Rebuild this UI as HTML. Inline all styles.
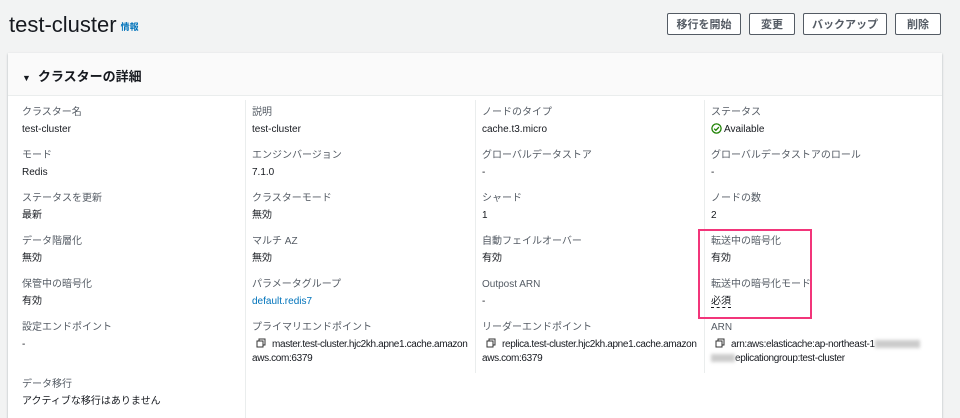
<!DOCTYPE html>
<html><head><meta charset="utf-8"><style>
*{margin:0;padding:0;box-sizing:border-box}
html,body{width:960px;height:418px;overflow:hidden}
body{background:#f2f3f3;font-family:"Liberation Sans","Noto Sans CJK JP",sans-serif;color:#16191f;position:relative}
.t{position:absolute;left:9px;top:12px;font-size:22px;color:#16191f}
.t small{font-size:9px;color:#0073bb;font-weight:bold;margin-left:4px;vertical-align:middle}
.btn{position:absolute;top:13px;height:22px;border:1px solid #545b64;background:#fff;font-size:11px;font-weight:bold;color:#545b64;display:flex;align-items:center;justify-content:center;border-radius:2px}
.panel{position:absolute;left:8px;top:53px;width:934px;height:380px;background:#fff;box-shadow:0 1px 2px rgba(0,28,36,.3)}
.hd{height:43px;background:#fafafa;border-bottom:1px solid #eaeded;font-size:13px;font-weight:bold;padding:13px 0 0 14px}
.hd span{font-size:9px;margin-right:7px}
.div{position:absolute;width:1px;background:#eaeded}
.f{position:absolute;font-size:10px;line-height:14px;white-space:nowrap}
.f .l{color:#545b64}
.f .v{margin-top:3px;color:#16191f}
.f .v.n{letter-spacing:-0.35px}
.ok{color:#1d8102}
a{color:#0073bb;text-decoration:none}
.pink{position:absolute;left:698px;top:229px;width:114px;height:90px;border:2px solid #f2357a}
.cp{display:inline-block;vertical-align:-1px;margin:0 6px 0 4px}
.blur{display:inline-block;width:45px;height:8px;background:#ccc;filter:blur(1.5px);vertical-align:middle}
</style></head><body>
<div class="t">test-cluster<small>情報</small></div>
<div class="btn" style="left:667px;width:74px">移行を開始</div>
<div class="btn" style="left:749px;width:46px">変更</div>
<div class="btn" style="left:803px;width:84px">バックアップ</div>
<div class="btn" style="left:895px;width:46px">削除</div>
<div class="panel"><div class="hd"><span>▼</span>クラスターの詳細</div></div>
<div class="div" style="left:245px;top:100px;height:318px"></div>
<div class="div" style="left:475px;top:100px;height:273px"></div>
<div class="div" style="left:704px;top:100px;height:273px"></div>

<div class="f" style="left:22px;top:106px"><div class="l">クラスター名</div><div class="v">test-cluster</div></div>
<div class="f" style="left:252px;top:106px"><div class="l">説明</div><div class="v">test-cluster</div></div>
<div class="f" style="left:482px;top:106px"><div class="l">ノードのタイプ</div><div class="v">cache.t3.micro</div></div>
<div class="f" style="left:711px;top:106px"><div class="l">ステータス</div><div class="v ok"><svg width="11" height="11" viewBox="0 0 12 12" style="vertical-align:-2px;margin-right:2px"><circle cx="6" cy="6" r="5" fill="none" stroke="#1d8102" stroke-width="1.4"/><path d="M3.5 6.2l1.8 1.8 3.3-3.5" fill="none" stroke="#1d8102" stroke-width="1.4"/></svg>Available</div></div>

<div class="f" style="left:22px;top:149px"><div class="l">モード</div><div class="v">Redis</div></div>
<div class="f" style="left:252px;top:149px"><div class="l">エンジンバージョン</div><div class="v">7.1.0</div></div>
<div class="f" style="left:482px;top:149px"><div class="l">グローバルデータストア</div><div class="v">-</div></div>
<div class="f" style="left:711px;top:149px"><div class="l">グローバルデータストアのロール</div><div class="v">-</div></div>

<div class="f" style="left:22px;top:192px"><div class="l">ステータスを更新</div><div class="v">最新</div></div>
<div class="f" style="left:252px;top:192px"><div class="l">クラスターモード</div><div class="v">無効</div></div>
<div class="f" style="left:482px;top:192px"><div class="l">シャード</div><div class="v">1</div></div>
<div class="f" style="left:711px;top:192px"><div class="l">ノードの数</div><div class="v">2</div></div>

<div class="f" style="left:22px;top:235px"><div class="l">データ階層化</div><div class="v">無効</div></div>
<div class="f" style="left:252px;top:235px"><div class="l">マルチ AZ</div><div class="v">無効</div></div>
<div class="f" style="left:482px;top:235px"><div class="l">自動フェイルオーバー</div><div class="v">有効</div></div>
<div class="f" style="left:711px;top:235px"><div class="l">転送中の暗号化</div><div class="v">有効</div></div>

<div class="f" style="left:22px;top:278px"><div class="l">保管中の暗号化</div><div class="v">有効</div></div>
<div class="f" style="left:252px;top:278px"><div class="l">パラメータグループ</div><div class="v"><a>default.redis7</a></div></div>
<div class="f" style="left:482px;top:278px"><div class="l">Outpost ARN</div><div class="v">-</div></div>
<div class="f" style="left:711px;top:278px"><div class="l">転送中の暗号化モード</div><div class="v"><span style="border-bottom:1px dashed #16191f">必須</span></div></div>

<div class="f" style="left:22px;top:321px"><div class="l">設定エンドポイント</div><div class="v">-</div></div>
<div class="f" style="left:252px;top:321px"><div class="l">プライマリエンドポイント</div><div class="v n"><svg class="cp" width="10" height="10" viewBox="0 0 10 10"><rect x="1" y="3" width="6" height="6" fill="none" stroke="#333"/><path d="M3 3V1h6v6H7" fill="none" stroke="#333"/></svg>master.test-cluster.hjc2kh.apne1.cache.amazon<br>aws.com:6379</div></div>
<div class="f" style="left:482px;top:321px"><div class="l">リーダーエンドポイント</div><div class="v n"><svg class="cp" width="10" height="10" viewBox="0 0 10 10"><rect x="1" y="3" width="6" height="6" fill="none" stroke="#333"/><path d="M3 3V1h6v6H7" fill="none" stroke="#333"/></svg>replica.test-cluster.hjc2kh.apne1.cache.amazon<br>aws.com:6379</div></div>
<div class="f" style="left:711px;top:321px"><div class="l">ARN</div><div class="v n"><svg class="cp" width="10" height="10" viewBox="0 0 10 10"><rect x="1" y="3" width="6" height="6" fill="none" stroke="#333"/><path d="M3 3V1h6v6H7" fill="none" stroke="#333"/></svg>arn:aws:elasticache:ap-northeast-1<span class="blur"></span><br><span class="blur" style="width:24px"></span>eplicationgroup:test-cluster</div></div>

<div class="f" style="left:22px;top:378px"><div class="l">データ移行</div><div class="v">アクティブな移行はありません</div></div>
<div class="pink"></div>
</body></html>
